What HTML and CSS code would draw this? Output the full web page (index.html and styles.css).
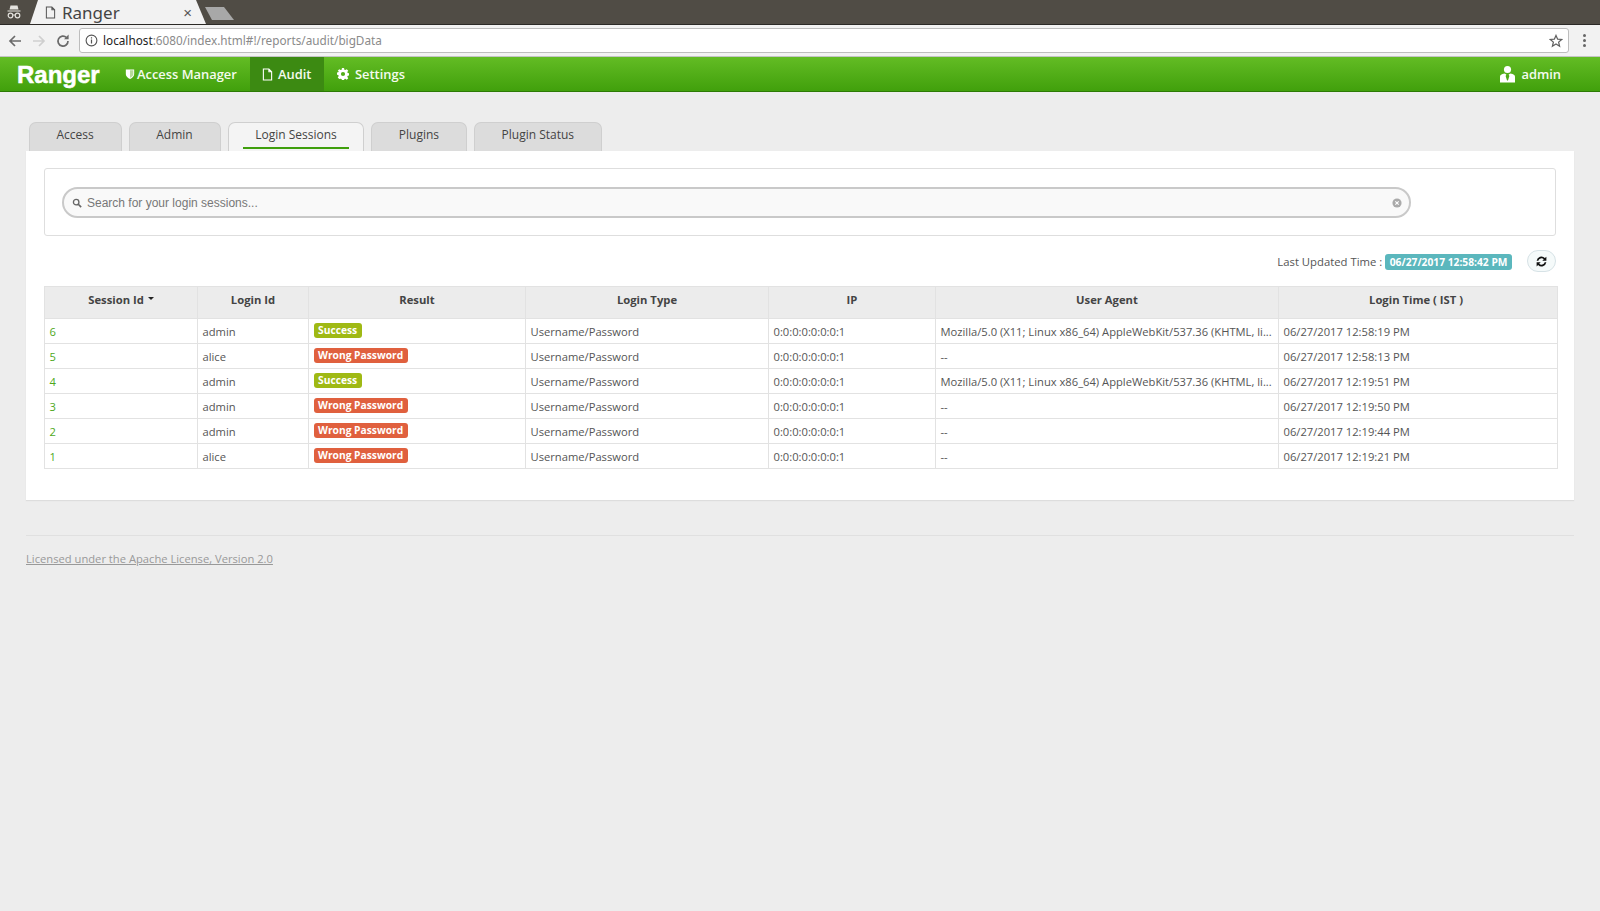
FILE: index.html
```html
<!DOCTYPE html>
<html lang="en">
<head>
<meta charset="utf-8">
<title>Ranger</title>
<link rel="stylesheet" href="styles.css">
</head>
<body>
<header class="chrome">
  <div class="tabstrip">
    <svg class="incognito" viewBox="0 0 16 16" width="16" height="16"><path d="M4.5 1.5h7l1 4h-9zM1.5 6.5h13v1h-13z" fill="#e4e2de"/><circle cx="4.5" cy="11.5" r="2.3" fill="none" stroke="#e4e2de" stroke-width="1.2"/><circle cx="11.5" cy="11.5" r="2.3" fill="none" stroke="#e4e2de" stroke-width="1.2"/><path d="M6.8 11h2.4" stroke="#e4e2de"/></svg>
    <div class="tab">
      <svg class="tab-doc" viewBox="0 0 12 14" width="11" height="13"><path d="M1.5 1h6l3 3v9h-9zM7.5 1v3h3" fill="none" stroke="#555" stroke-width="1.1"/></svg>
      <span class="tab-title">Ranger</span>
      <span class="tab-close">×</span>
    </div>
    <div class="newtab"></div>
  </div>
  <div class="toolbar">
    <svg class="tool" viewBox="0 0 16 16" width="16" height="16"><path d="M14 8H3M8 3 3 8l5 5" fill="none" stroke="#6a6a6a" stroke-width="1.7"/></svg>
    <svg class="tool" viewBox="0 0 16 16" width="16" height="16"><path d="M2 8h11M8 3l5 5-5 5" fill="none" stroke="#cfcfcf" stroke-width="1.7"/></svg>
    <svg class="tool" viewBox="0 0 16 16" width="16" height="16"><path d="M13 8a5 5 0 1 1-1.5-3.5" fill="none" stroke="#6a6a6a" stroke-width="1.7"/><path d="M13.6 1.6v4.6H9z" fill="#6a6a6a"/></svg>
    <div class="omnibox">
      <svg class="info" viewBox="0 0 14 14" width="13" height="13"><circle cx="7" cy="7" r="5.8" fill="none" stroke="#555" stroke-width="1.2"/><path d="M7 6v4.2M7 3.5v1.3" stroke="#555" stroke-width="1.3"/></svg>
      <span class="url"><span class="host">localhost</span>:6080/index.html#!/reports/audit/bigData</span>
      <svg class="star" viewBox="0 0 16 16" width="14" height="14"><path d="m8 1.6 1.9 4.3 4.6.4-3.5 3 1.1 4.6L8 11.4l-4.1 2.5L5 9.3l-3.5-3 4.6-.4z" fill="none" stroke="#5f5f5f" stroke-width="1.4"/></svg>
    </div>
    <div class="kebab"><i></i><i></i><i></i></div>
  </div>
</header>

<nav class="navbar">
  <span class="brand">Ranger</span>
  <a class="nav-item nav-access"><svg viewBox="0 0 12 14" width="10" height="12"><path d="M1 1.5h10v5.5c0 3-2.5 5-5 6-2.5-1-5-3-5-6z" fill="#fff"/><path d="M6 2.5h4V7c0 2.2-2 3.700-4 4.600z" fill="#5aae20" opacity=".45"/></svg><span>Access Manager</span></a>
  <a class="nav-item nav-audit active"><svg viewBox="0 0 12 14" width="11" height="13"><path d="M1.5 1h6l3 3v9h-9zM7.5 1v3h3" fill="none" stroke="#fff" stroke-width="1.2"/></svg><span>Audit</span></a>
  <a class="nav-item nav-settings"><svg viewBox="0 0 16 16" width="12" height="12"><path fill="#fff" fill-rule="evenodd" d="M6.600 0h2.800l.4 2.200 1.300.6L13 1.500l2 2-1.300 1.900.6 1.300 2.200.4v2.800l-2.200.4-.6 1.300 1.300 1.900-2 2-1.900-1.300-1.300.6-.4 2.200H6.600l-.4-2.200-1.300-.6L3 14.500l-2-2 1.300-1.900-.6-1.300L-.5 8.900V6.100l2.200-.4.6-1.300L1 3.500l2-2 1.900 1.300 1.300-.6zM8 5.200a2.800 2.800 0 1 0 0 5.600 2.800 2.800 0 0 0 0-5.600z"/></svg><span>Settings</span></a>
  <a class="nav-item nav-user"><svg viewBox="0 0 16 18" width="15" height="18"><circle cx="8" cy="4.200" r="3.800" fill="#fff"/><path d="M0 18v-6c0-2 1.500-3.200 4.800-3.600L6.800 9.500 6 11l1.500 5h1L10 11l-.8-1.500 2-1.100C14.500 8.800 16 10 16 12v6z" fill="#fff"/></svg><span>admin</span></a>
</nav>

<main class="page">
  <ul class="tabs">
    <li class="tabs-item">Access</li>
    <li class="tabs-item">Admin</li>
    <li class="tabs-item current"><span>Login Sessions</span></li>
    <li class="tabs-item">Plugins</li>
    <li class="tabs-item">Plugin Status</li>
  </ul>
  <section class="panel">
    <div class="well">
      <div class="search">
        <svg viewBox="0 0 12 12" width="10" height="10"><circle cx="5" cy="5" r="3.300" fill="none" stroke="#666" stroke-width="1.600"/><path d="m7.500 7.500 3.500 3.500" stroke="#666" stroke-width="2"/></svg>
        <span class="placeholder">Search for your login sessions...</span>
        <svg class="clear" viewBox="0 0 12 12" width="10" height="10"><circle cx="6" cy="6" r="5.500" fill="#aaa"/><path d="m4 4 4 4M8 4l-4 4" stroke="#fff" stroke-width="1.300"/></svg>
      </div>
    </div>
    <div class="status">
      <span class="status-label">Last Updated Time :</span>
      <span class="label info-label">06/27/2017 12:58:42 PM</span>
      <button class="refresh" type="button"><svg viewBox="0 0 16 16" width="13" height="13"><path d="M2 7a6 6 0 0 1 10.200-3.200L14 2v5H9l1.800-1.800A4 4 0 0 0 4.100 7zM14 9a6 6 0 0 1-10.200 3.200L2 14V9h5l-1.800 1.800A4 4 0 0 0 11.900 9z" fill="#111"/></svg></button>
    </div>
    <table class="grid">
      <colgroup>
        <col class="c1"><col class="c2"><col class="c3"><col class="c4"><col class="c5"><col class="c6"><col class="c7">
      </colgroup>
      <thead>
        <tr><th>Session Id <i class="caret"></i></th><th>Login Id</th><th>Result</th><th>Login Type</th><th>IP</th><th>User Agent</th><th>Login Time ( IST )</th></tr>
      </thead>
      <tbody>
        <tr><td><a class="id">6</a></td><td>admin</td><td><span class="label ok">Success</span></td><td>Username/Password</td><td>0:0:0:0:0:0:0:1</td><td>Mozilla/5.0 (X11; Linux x86_64) AppleWebKit/537.36 (KHTML, li...</td><td>06/27/2017 12:58:19 PM</td></tr>
        <tr><td><a class="id">5</a></td><td>alice</td><td><span class="label bad">Wrong Password</span></td><td>Username/Password</td><td>0:0:0:0:0:0:0:1</td><td>--</td><td>06/27/2017 12:58:13 PM</td></tr>
        <tr><td><a class="id">4</a></td><td>admin</td><td><span class="label ok">Success</span></td><td>Username/Password</td><td>0:0:0:0:0:0:0:1</td><td>Mozilla/5.0 (X11; Linux x86_64) AppleWebKit/537.36 (KHTML, li...</td><td>06/27/2017 12:19:51 PM</td></tr>
        <tr><td><a class="id">3</a></td><td>admin</td><td><span class="label bad">Wrong Password</span></td><td>Username/Password</td><td>0:0:0:0:0:0:0:1</td><td>--</td><td>06/27/2017 12:19:50 PM</td></tr>
        <tr><td><a class="id">2</a></td><td>admin</td><td><span class="label bad">Wrong Password</span></td><td>Username/Password</td><td>0:0:0:0:0:0:0:1</td><td>--</td><td>06/27/2017 12:19:44 PM</td></tr>
        <tr><td><a class="id">1</a></td><td>alice</td><td><span class="label bad">Wrong Password</span></td><td>Username/Password</td><td>0:0:0:0:0:0:0:1</td><td>--</td><td>06/27/2017 12:19:21 PM</td></tr>
      </tbody>
    </table>
  </section>
  <footer class="footer">
    <a class="license">Licensed under the Apache License, Version 2.0</a>
  </footer>
</main>
</body>
</html>
```
FILE: styles.css
```css
* { box-sizing: border-box; }
html, body { margin: 0; height: 100%; }
body { background: #ededed; font-family: "Open Sans", "Noto Sans", sans-serif; font-size: 11.2px; color: #555; overflow: hidden; }

.tabstrip { height: 25px; background: #504c45; border-bottom: 1px solid #2b2926; display: flex; align-items: flex-end; padding-left: 6px; }
.incognito { margin-bottom: 4px; }
.tab { width: 176px; height: 24px; margin-left: 8px; padding: 0 14px 0 15px; background: #f2f2f2; display: flex; align-items: center; clip-path: polygon(0 100%, 8px 0, 166px 0, 100% 100%); }
.tab-doc { margin-right: 6px; }
.tab-title { font-family: "Noto Sans", sans-serif; font-size: 17px; line-height: 24px; padding-top: 1px; color: #444; flex: 1; }
.tab-close { font-size: 15px; color: #555; font-family: "Liberation Sans", sans-serif; }
.newtab { width: 29px; height: 13px; margin: 0 0 4px -1px; background: #a8a8a8; clip-path: polygon(0 0, 19px 0, 100% 100%, 7px 100%); }

.toolbar { height: 32px; background: #f2f2f2; border-bottom: 1px solid #c4c4c4; display: flex; align-items: center; padding-left: 7px; }
.tool { margin-right: 8px; }
.omnibox { width: 1490px; height: 25px; background: #fff; border: 1px solid #bdbdbd; border-radius: 3px; display: flex; align-items: center; padding: 0 5px; }
.info { margin-right: 5px; }
.url { flex: 1; padding-bottom: 2px; font-family: "Noto Sans", sans-serif; font-size: 11.75px; color: #8a8a8a; }
.host { color: #222; }
.kebab { width: 31px; display: flex; flex-direction: column; align-items: center; gap: 2px; }
.kebab i { width: 3px; height: 3px; border-radius: 50%; background: #666; }

.navbar { height: 35px; background: linear-gradient(#63bc24, #41a00c); border-bottom: 1px solid #2c7a05; display: flex; align-items: stretch; color: #fff; font-size: 12.9px; }
.brand { width: 125px; padding-left: 17px; font-family: "Liberation Sans", sans-serif; font-weight: 700; font-size: 24px; line-height: 35px; -webkit-text-stroke: .5px #fff; }
.nav-item { display: flex; align-items: center; font-weight: 600; color: #f4fbee; }
.nav-access { width: 125px; gap: 2px; }
.nav-audit { width: 74px; padding-left: 12px; gap: 5px; background: #3c8a12; }
.nav-settings { margin-left: 13px; gap: 6px; }
.nav-user { margin-left: auto; margin-right: 39px; gap: 6px; }

.page { padding: 0 26px; }
.tabs { list-style: none; margin: 30px 0 0; padding: 0 0 0 3px; display: flex; gap: 7px; height: 29px; }
.tabs-item { height: 29px; padding: 3px 27px 0 26.5px; background: #dcdcdc; border: 1px solid #cfcfcf; border-bottom: 0; border-radius: 7px 7px 0 0; color: #444; line-height: 18px; font-size: 12px; }
.tabs-item.current { background: #f4f4f4; padding: 3px 14.5px 0; }
.tabs-item.current span { display: block; height: 23px; padding: 0 12px; border-bottom: 2px solid #3f9f0c; }

.panel { background: #fff; height: 349px; padding: 17px 17px 0 18px; box-shadow: 0 1px 1px #ddd; }
.well { width: 1512px; height: 68px; padding: 18px 17px; border: 1px solid #dedede; border-radius: 3px; }
.search { width: 1349px; height: 31px; display: flex; align-items: center; gap: 5px; padding: 0 7px 0 8px; background: #f9f9f9; border: 2px solid #c9c9c9; border-radius: 16px; }
.placeholder { flex: 1; font-family: "Liberation Sans", sans-serif; font-size: 12px; color: #777; }

.status { height: 50px; padding: 14px 0 0; width: 1512px; display: flex; align-items: flex-start; justify-content: flex-end; }
.status-label { margin: 4px 3px 0 0; font-size: 11.3px; line-height: 16px; }
.label { display: inline-block; height: 15px; padding: 0 4.5px; border-radius: 3px; color: #fff; font-weight: 700; font-size: 10.25px; line-height: 15px; }
.info-label { height: 16px; margin-top: 4px; line-height: 16px; background: #5bb7bd; }
.refresh { width: 29px; height: 22px; margin-left: 15px; padding: 0; background: #f5fafa; border: 1px solid #d6e2e6; border-radius: 11px; display: flex; align-items: center; justify-content: center; }

.grid { table-layout: fixed; width: 1513px; border-collapse: collapse; }
.c1 { width: 153px; } .c2 { width: 111px; } .c3 { width: 217px; } .c4 { width: 243px; } .c5 { width: 167px; } .c6 { width: 343px; } .c7 { width: 279px; }
.grid th, .grid td { border: 1px solid #e2e2e2; padding: 0 4.5px; white-space: nowrap; overflow: hidden; }
.grid th { height: 32px; background: #ececec; color: #444; text-align: center; font-weight: 700; font-size: 11.25px; padding-bottom: 7px; }
.grid th:last-child { padding-right: 8.5px; }
.grid td { height: 25px; }
.grid td .label { position: relative; top: -1px; }
.caret { display: inline-block; width: 0; height: 0; margin: 0 0 4px 1px; border: 3.5px solid transparent; border-top-color: #222; border-bottom: 0; }
.id { color: #4ea81a; }
.ok { background: #9fb914; }
.bad { background: #e0603e; }

.footer { margin-top: 35px; padding-top: 15px; border-top: 1px solid #e0e0e0; }
.license { color: #999; text-decoration: underline; font-size: 11.2px; }
```
